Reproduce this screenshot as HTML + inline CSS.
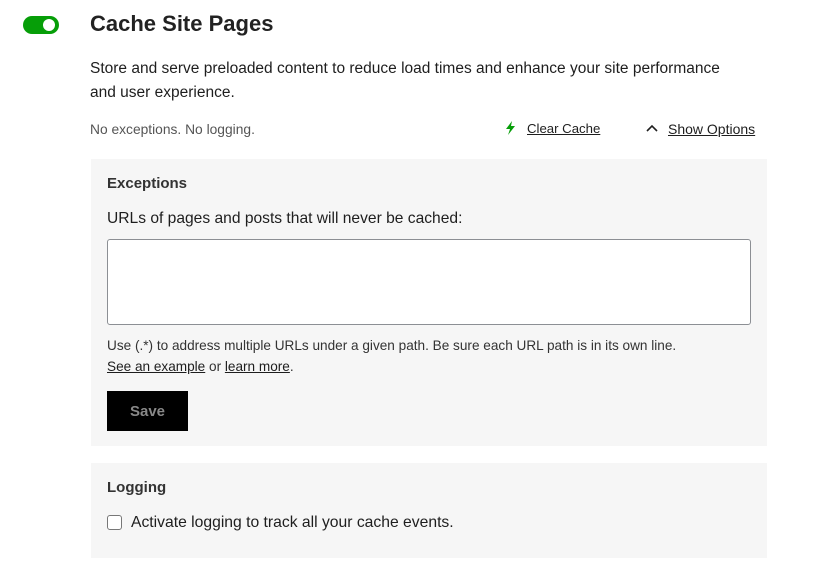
<!DOCTYPE html><html><head><style>
body{margin:0;width:824px;height:571px;background:#fff;font-family:"Liberation Sans",sans-serif;color:#1e1e1e;position:relative;overflow:hidden}
.a{position:absolute;white-space:nowrap}
u{text-decoration:underline}
</style></head><body>
<div class="a" style="left:23px;top:16px;width:36px;height:18px;border-radius:9px;background:#069e08"></div>
<div class="a" style="left:43px;top:19px;width:12px;height:12px;border-radius:6px;background:#fff"></div>
<div class="a" style="left:90px;top:11px;font-size:22px;font-weight:bold;color:#222">Cache Site Pages</div>
<div class="a" style="left:90px;top:57px;width:660px;white-space:normal;font-size:15.5px;line-height:24px;color:#1e1e1e">Store and serve preloaded content to reduce load times and enhance your site performance and user experience.</div>
<div class="a" style="left:90px;top:122px;font-size:13.8px;color:#555">No exceptions. No logging.</div>
<svg class="a" style="left:505px;top:121px" width="12" height="14" viewBox="0 0 12 14"><path d="M7 0 L1 8 H5 L3 14 L10 5 H6 Z" fill="#069e08"/></svg>
<div class="a" style="left:527px;top:121px;font-size:13.2px"><u>Clear Cache</u></div>
<svg class="a" style="left:646px;top:124px" width="12" height="8" viewBox="0 0 12 8"><path d="M1 7 L6 2 L11 7" stroke="#1e1e1e" stroke-width="1.6" fill="none"/></svg>
<div class="a" style="left:668px;top:121px;font-size:14px"><u>Show Options</u></div>
<div class="a" style="left:91px;top:159px;width:676px;height:287px;background:#f6f6f6"></div>
<div class="a" style="left:107px;top:175px;font-size:15px;font-weight:bold;color:#333">Exceptions</div>
<div class="a" style="left:107px;top:210px;font-size:15.6px;color:#1e1e1e">URLs of pages and posts that will never be cached:</div>
<div class="a" style="left:107px;top:239px;width:642px;height:84px;background:#fff;border:1px solid #8c8f94;border-radius:3px"></div>
<div class="a" style="left:107px;top:335px;font-size:13.6px;line-height:21px;color:#333">Use (.*) to address multiple URLs under a given path. Be sure each URL path is in its own line.<br><u style="color:#1e1e1e">See an example</u> or <u style="color:#1e1e1e">learn more</u>.</div>
<div class="a" style="left:107px;top:391px;width:81px;height:40px;background:#000;color:#888;font-size:15px;font-weight:bold;text-align:center;line-height:42px">Save</div>
<div class="a" style="left:91px;top:463px;width:676px;height:95px;background:#f6f6f6"></div>
<div class="a" style="left:107px;top:479px;font-size:15px;font-weight:bold;color:#333">Logging</div>
<div class="a" style="left:107px;top:515px;width:13px;height:13px;border:1px solid #777;border-radius:3px;background:#fff"></div>
<div class="a" style="left:131px;top:514px;font-size:15.7px;color:#1e1e1e">Activate logging to track all your cache events.</div>
</body></html>
